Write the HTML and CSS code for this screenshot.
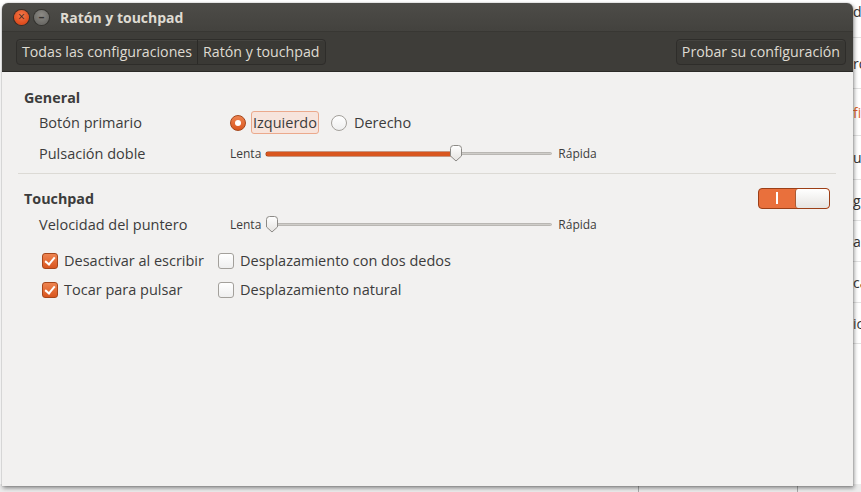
FILE: index.html
```html
<!DOCTYPE html>
<html lang="es">
<head>
    <meta charset="UTF-8">
    <title>Ratón y touchpad</title>
    <link rel="stylesheet" href="styles.css">
</head>
<body>
    <div class="desk">
        <!-- ventana de fondo, solo asoma por la derecha -->
        <div class="behind">
            <div class="behind-row first">de</div>
            <div class="behind-row" style="height: 51px">rd</div>
            <div class="behind-row orange" style="height: 47px">fi</div>
            <div class="behind-row" style="height: 44px">u</div>
            <div class="behind-row">g</div>
            <div class="behind-row">a</div>
            <div class="behind-row">ca</div>
            <div class="behind-row">ic</div>
        </div>
        <div class="behind-bottom">
            <span class="vline"></span>
            <span class="vline"></span>
        </div>

        <div class="window">
            <div class="titlebar">
                <span class="wbtn close">&#215;</span>
                <span class="wbtn mini">&#8211;</span>
                <span class="wtitle">Ratón y touchpad</span>
            </div>

            <div class="toolbar">
                <div class="crumbs">
                    <span class="tbtn">Todas las configuraciones</span>
                    <span class="tbtn">Ratón y touchpad</span>
                </div>
                <span class="tbtn single">Probar su configuración</span>
            </div>

            <div class="content">
                <div class="section-head">General</div>

                <div class="row">
                    <span class="label">Botón primario</span>
                    <div class="ctrl">
                        <span class="radio on"></span>
                        <span class="opt focus">Izquierdo</span>
                        <span class="radio"></span>
                        <span class="opt">Derecho</span>
                    </div>
                </div>

                <div class="row">
                    <span class="label">Pulsación doble</span>
                    <div class="ctrl">
                        <span class="small">Lenta</span>
                        <div class="slider">
                            <div class="fill" style="width: 66.5%"></div>
                            <svg class="knob" style="left: 66.5%" width="14" height="17" viewBox="0 0 14 17">
                                <defs>
                                    <linearGradient id="kg" x1="0" y1="0" x2="0" y2="1">
                                        <stop offset="0" stop-color="#ffffff"/>
                                        <stop offset="1" stop-color="#e4e2df"/>
                                    </linearGradient>
                                </defs>
                                <path d="M1.5 3.5a3 3 0 0 1 3-3h5a3 3 0 0 1 3 3v7.5l-5.5 5l-5.5-5z" fill="url(#kg)" stroke="#8c8a86"/>
                            </svg>
                        </div>
                        <span class="small">Rápida</span>
                    </div>
                </div>

                <div class="sep"></div>

                <div class="section-head split">
                    <span>Touchpad</span>
                    <span class="switch"><span class="on-part"><i></i></span><span class="thumb"></span></span>
                </div>

                <div class="row">
                    <span class="label">Velocidad del puntero</span>
                    <div class="ctrl">
                        <span class="small">Lenta</span>
                        <div class="slider">
                            <svg class="knob" style="left: 1.8%" width="14" height="17" viewBox="0 0 14 17">
                                <path d="M1.5 3.5a3 3 0 0 1 3-3h5a3 3 0 0 1 3 3v7.5l-5.5 5l-5.5-5z" fill="url(#kg)" stroke="#8c8a86"/>
                            </svg>
                        </div>
                        <span class="small">Rápida</span>
                    </div>
                </div>

                <div class="checks">
                    <label class="check"><span class="box on"></span>Desactivar al escribir</label>
                    <label class="check"><span class="box"></span>Desplazamiento con dos dedos</label>
                    <label class="check"><span class="box on"></span>Tocar para pulsar</label>
                    <label class="check"><span class="box"></span>Desplazamiento natural</label>
                </div>
            </div>
        </div>
    </div>
</body>
</html>
```

FILE: styles.css
```css
* {
    box-sizing: border-box;
}

body {
    margin: 0;
    background: #ffffff;
    font-family: 'Open Sans', 'Noto Sans', sans-serif;
    color: #3c3c3c;
}

.desk {
    position: relative;
    width: 861px;
    height: 492px;
    overflow: hidden;
    background: #ffffff;
}

/* ventana de detrás */
.behind {
    position: absolute;
    top: 0;
    left: 820px;
    width: 80px;
    display: flex;
    flex-direction: column;
}

.behind-row {
    height: 41px;
    padding-left: 33px;
    display: flex;
    align-items: center;
    font-size: 14px;
    color: #333;
    border-bottom: 1px solid #e2e2e2;
}

.behind-row.first {
    height: 38px;
    align-items: flex-start;
    padding-top: 2px;
}

.behind-row.orange {
    color: #e0622a;
}

.behind-bottom {
    position: absolute;
    left: 0;
    right: 0;
    top: 484px;
    bottom: 0;
    background: #ececec;
    display: flex;
    gap: 158px;
    padding-left: 638px;
}

.vline {
    width: 1px;
    background: #a9a9a9;
}

/* ventana principal */
.window {
    position: absolute;
    left: 2px;
    top: 3px;
    width: 851px;
    height: 483px;
    border-radius: 6px 6px 0 0;
    background: #f2f1f0;
    box-shadow: 1px 2px 4px rgba(0,0,0,0.45), 0 0 1px rgba(0,0,0,0.5);
    display: flex;
    flex-direction: column;
    overflow: hidden;
}

.titlebar {
    height: 28px;
    display: flex;
    align-items: center;
    padding-left: 12px;
    gap: 5px;
    background: linear-gradient(#4d4c48, #43423e);
}

.wbtn {
    width: 15px;
    height: 15px;
    border-radius: 50%;
    display: flex;
    align-items: center;
    justify-content: center;
    font-size: 12px;
    line-height: 1;
    color: #3a2620;
}

.close {
    background: radial-gradient(circle at 50% 35%, #f37a4c, #df4c1d 70%);
    box-shadow: 0 0 0 1px #3b2a23;
}

.mini {
    background: radial-gradient(circle at 50% 35%, #8d8b86, #6c6b67 70%);
    box-shadow: 0 0 0 1px #34332f;
    color: #353430;
    font-weight: bold;
}

.wtitle {
    margin-left: 6px;
    font-weight: bold;
    font-size: 14px;
    color: #dfdbd2;
}

.toolbar {
    height: 41px;
    display: flex;
    align-items: center;
    justify-content: space-between;
    padding: 0 7px 0 14px;
    background: #3e3d39;
    border-top: 1px solid #383733;
    border-bottom: 1px solid #2b2a27;
}

.crumbs {
    display: flex;
    border: 1px solid #2e2d2a;
    border-radius: 4px;
    box-shadow: inset 0 1px 0 rgba(255,255,255,0.06);
    background: #3a3935;
}

.tbtn {
    height: 24px;
    padding: 0 5px;
    display: flex;
    align-items: center;
    font-size: 14.2px;
    color: #dfdbd2;
}

.crumbs .tbtn + .tbtn {
    border-left: 1px solid #2b2a27;
}

.tbtn.single {
    height: 26px;
    border: 1px solid #2e2d2a;
    border-radius: 4px;
    background: #3a3935;
    box-shadow: inset 0 1px 0 rgba(255,255,255,0.06);
}

.content {
    flex: 1;
    padding: 15px 17px 0 16px;
    font-size: 14.5px;
}

.section-head {
    height: 20px;
    padding-left: 6px;
    display: flex;
    align-items: center;
    font-weight: bold;
    font-size: 14.3px;
}

.section-head.split {
    height: 22px;
    margin-top: 13px;
    justify-content: space-between;
    padding-right: 6px;
}

.row {
    height: 31px;
    display: flex;
    align-items: center;
    padding-left: 21px;
}

.label {
    width: 191px;
}

.ctrl {
    display: flex;
    align-items: center;
}

.radio {
    width: 16px;
    height: 16px;
    border-radius: 50%;
    border: 1px solid #a3a09b;
    background: linear-gradient(#ffffff, #efefef);
    margin-right: 5px;
    display: flex;
    align-items: center;
    justify-content: center;
}

.radio.on {
    border-color: #a6461b;
    background: linear-gradient(#ee8450, #d9561f);
}

.radio.on::after {
    content: "";
    width: 6px;
    height: 6px;
    border-radius: 50%;
    background: #ffffff;
}

.opt {
    height: 23px;
    padding: 0 1px;
    display: flex;
    align-items: center;
    margin-right: 12px;
    border: 1px solid transparent;
    border-radius: 3px;
}

.opt.focus {
    border-color: #eba98c;
    background: #f7e4dc;
}

.small {
    font-size: 12px;
}

.slider {
    position: relative;
    width: 286px;
    height: 3px;
    margin: 0 6px 0 5px;
    background: #cfcdc9;
    border: 1px solid #b9b7b3;
    border-radius: 2px;
}

.fill {
    position: absolute;
    left: -1px;
    top: -1px;
    height: 4px;
    background: #d9561f;
    border-radius: 2px;
    box-shadow: 0 0 0 0.5px #9c3d15;
}

.knob {
    position: absolute;
    top: -8px;
    margin-left: -7px;
}

.sep {
    height: 1px;
    margin-top: 4px;
    background: #dcdad5;
}

.switch {
    width: 72px;
    height: 21px;
    display: flex;
    border: 1px solid #9c3f17;
    border-radius: 4px;
    overflow: hidden;
    background: #e9703c;
}

.on-part {
    flex: 1;
    display: flex;
    align-items: center;
    justify-content: center;
}

.on-part i {
    width: 2px;
    height: 12px;
    background: #ffffff;
}

.thumb {
    width: 34px;
    background: linear-gradient(#ffffff, #e6e4e1);
    border-left: 1px solid #a95a35;
    border-radius: 3px;
}

.checks {
    margin-top: 6px;
    padding-left: 24px;
    display: grid;
    grid-template-columns: 176px auto;
    grid-auto-rows: 29px;
}

.check {
    display: flex;
    align-items: center;
}

.box {
    width: 16px;
    height: 16px;
    margin-right: 6px;
    border: 1px solid #a3a09b;
    border-radius: 3px;
    background: linear-gradient(#ffffff, #efefef);
    position: relative;
}

.box.on {
    border-color: #a6461b;
    background: linear-gradient(#ee8450, #d9561f);
}

.box.on::after {
    content: "";
    position: absolute;
    left: 4px;
    top: 1px;
    width: 4px;
    height: 8px;
    border: solid #ffffff;
    border-width: 0 2px 2px 0;
    transform: rotate(40deg);
}
```
